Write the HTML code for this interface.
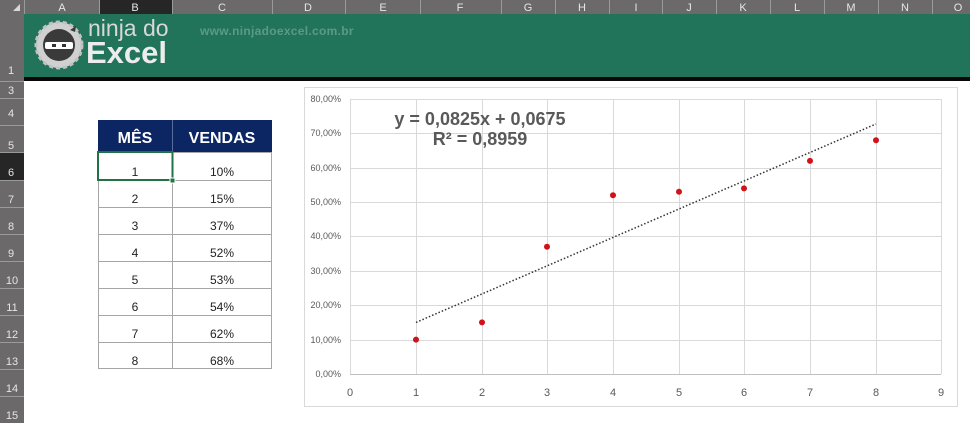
<!DOCTYPE html>
<html><head><style>
body{margin:0;width:970px;height:423px;overflow:hidden;background:#fff;font-family:"Liberation Sans",sans-serif;position:relative}
.a{position:absolute}
</style></head><body>
<svg class="a" style="left:0;top:0" width="970" height="423" xmlns="http://www.w3.org/2000/svg" font-family="Liberation Sans, sans-serif">
<rect x="0" y="0" width="970" height="14" fill="#6b6969"/>
<rect x="99" y="0" width="73" height="14" fill="#262626"/>
<polygon points="20,4 20,11 13,11" fill="#d8d8d8"/>
<g stroke="#9a9a9a" stroke-width="1">
<line x1="24.5" y1="0" x2="24.5" y2="14"/><line x1="99.5" y1="0" x2="99.5" y2="14"/><line x1="172.5" y1="0" x2="172.5" y2="14"/><line x1="272.5" y1="0" x2="272.5" y2="14"/><line x1="345.5" y1="0" x2="345.5" y2="14"/><line x1="420.5" y1="0" x2="420.5" y2="14"/><line x1="501.5" y1="0" x2="501.5" y2="14"/><line x1="555.5" y1="0" x2="555.5" y2="14"/><line x1="609.5" y1="0" x2="609.5" y2="14"/><line x1="662.5" y1="0" x2="662.5" y2="14"/><line x1="716.5" y1="0" x2="716.5" y2="14"/><line x1="770.5" y1="0" x2="770.5" y2="14"/><line x1="824.5" y1="0" x2="824.5" y2="14"/><line x1="878.5" y1="0" x2="878.5" y2="14"/><line x1="932.5" y1="0" x2="932.5" y2="14"/>
</g>
<g fill="#e6e6e6" font-size="11" text-anchor="middle">
<text x="62" y="11">A</text><text x="135" y="11">B</text><text x="222" y="11">C</text><text x="308" y="11">D</text><text x="383" y="11">E</text><text x="460" y="11">F</text><text x="528" y="11">G</text><text x="582" y="11">H</text><text x="636" y="11">I</text><text x="689" y="11">J</text><text x="743" y="11">K</text><text x="797" y="11">L</text><text x="851" y="11">M</text><text x="905" y="11">N</text><text x="958" y="11">O</text>
</g>
<rect x="0" y="14" width="24" height="409" fill="#6b6969"/>
<rect x="0" y="152" width="24" height="28" fill="#262626"/>
<g stroke="#9a9a9a"><line x1="0" y1="81.5" x2="24" y2="81.5"/><line x1="0" y1="98.5" x2="24" y2="98.5"/><line x1="0" y1="125.5" x2="24" y2="125.5"/><line x1="0" y1="152.5" x2="24" y2="152.5"/><line x1="0" y1="180.5" x2="24" y2="180.5"/><line x1="0" y1="207.5" x2="24" y2="207.5"/><line x1="0" y1="234.5" x2="24" y2="234.5"/><line x1="0" y1="261.5" x2="24" y2="261.5"/><line x1="0" y1="288.5" x2="24" y2="288.5"/><line x1="0" y1="315.5" x2="24" y2="315.5"/><line x1="0" y1="342.5" x2="24" y2="342.5"/><line x1="0" y1="369.5" x2="24" y2="369.5"/><line x1="0" y1="396.5" x2="24" y2="396.5"/></g>
<g fill="#e6e6e6" font-size="11" text-anchor="middle">
<text x="11" y="74">1</text><text x="11" y="94">3</text><text x="11" y="117">4</text><text x="11" y="149">5</text><text x="11" y="176">6</text><text x="11" y="203">7</text><text x="11" y="230">8</text><text x="11" y="257">9</text><text x="12" y="284">10</text><text x="12" y="311">11</text><text x="12" y="338">12</text><text x="12" y="365">13</text><text x="12" y="392">14</text><text x="12" y="419">15</text>
</g>
<rect x="24" y="14" width="946" height="63" fill="#21735a"/>
<rect x="24" y="77" width="946" height="4" fill="#080808"/>
<circle cx="59" cy="45" r="23" fill="#d0d0d0" stroke="#c2c2c2" stroke-width="3" stroke-dasharray="4 3"/>
<circle cx="59" cy="45" r="16" fill="#3a3a3a"/>
<rect x="45" y="42" width="28" height="7" rx="2" fill="#fff"/>
<rect x="52" y="44" width="4" height="3" fill="#333"/><rect x="62" y="44" width="4" height="3" fill="#333"/>
<path d="M70 30 l6 -4 l-1 6z" fill="#3a3a3a"/>
<text x="88" y="36" font-size="23" fill="#d8d8d8">ninja do</text>
<text x="86" y="63" font-size="31" font-weight="bold" fill="#ececec">Excel</text>
<text x="200" y="35" font-size="12" font-weight="bold" fill="#5c9a85" letter-spacing="0.3">www.ninjadoexcel.com.br</text>
<rect x="98" y="120" width="174" height="32" fill="#0b2663"/>
<line x1="172.5" y1="120" x2="172.5" y2="152" stroke="#5a6d9a"/>
<text x="135" y="143" font-size="16" font-weight="bold" fill="#fff" text-anchor="middle">MÊS</text>
<text x="222" y="143" font-size="16" font-weight="bold" fill="#fff" text-anchor="middle">VENDAS</text>
<g stroke="#a6a6a6" fill="none">
<rect x="98.5" y="152.5" width="173" height="216"/>
<line x1="172.5" y1="152" x2="172.5" y2="369"/>
<line x1="98" y1="180.5" x2="272" y2="180.5"/><line x1="98" y1="207.5" x2="272" y2="207.5"/><line x1="98" y1="234.5" x2="272" y2="234.5"/><line x1="98" y1="261.5" x2="272" y2="261.5"/><line x1="98" y1="288.5" x2="272" y2="288.5"/><line x1="98" y1="315.5" x2="272" y2="315.5"/><line x1="98" y1="342.5" x2="272" y2="342.5"/>
</g>
<rect x="98" y="152" width="74.5" height="28" fill="none" stroke="#217346" stroke-width="2"/>
<rect x="170" y="178" width="5" height="5" fill="#217346" stroke="#fff" stroke-width="1"/>
<g font-size="12" fill="#222" text-anchor="middle">
<text x="135" y="176">1</text><text x="222" y="176">10%</text>
<text x="135" y="203">2</text><text x="222" y="203">15%</text>
<text x="135" y="230">3</text><text x="222" y="230">37%</text>
<text x="135" y="257">4</text><text x="222" y="257">52%</text>
<text x="135" y="284">5</text><text x="222" y="284">53%</text>
<text x="135" y="311">6</text><text x="222" y="311">54%</text>
<text x="135" y="338">7</text><text x="222" y="338">62%</text>
<text x="135" y="365">8</text><text x="222" y="365">68%</text>
</g>
<rect x="304.5" y="87.5" width="653" height="319" fill="#fff" stroke="#d9d9d9"/>
<g stroke="#d9d9d9">
<line x1="350" y1="99.5" x2="941" y2="99.5"/><line x1="350" y1="133.5" x2="941" y2="133.5"/><line x1="350" y1="168.5" x2="941" y2="168.5"/><line x1="350" y1="202.5" x2="941" y2="202.5"/><line x1="350" y1="236.5" x2="941" y2="236.5"/><line x1="350" y1="271.5" x2="941" y2="271.5"/><line x1="350" y1="305.5" x2="941" y2="305.5"/><line x1="350" y1="340.5" x2="941" y2="340.5"/>
<line x1="350.5" y1="99" x2="350.5" y2="374"/><line x1="416.5" y1="99" x2="416.5" y2="374"/><line x1="482.5" y1="99" x2="482.5" y2="374"/><line x1="547.5" y1="99" x2="547.5" y2="374"/><line x1="613.5" y1="99" x2="613.5" y2="374"/><line x1="679.5" y1="99" x2="679.5" y2="374"/><line x1="744.5" y1="99" x2="744.5" y2="374"/><line x1="810.5" y1="99" x2="810.5" y2="374"/><line x1="876.5" y1="99" x2="876.5" y2="374"/><line x1="941.5" y1="99" x2="941.5" y2="374"/>
</g>
<line x1="350" y1="374.5" x2="941" y2="374.5" stroke="#bfbfbf"/>
<g font-size="9" fill="#595959" text-anchor="end">
<text x="341" y="102">80,00%</text><text x="341" y="136">70,00%</text><text x="341" y="171">60,00%</text><text x="341" y="205">50,00%</text><text x="341" y="239">40,00%</text><text x="341" y="274">30,00%</text><text x="341" y="308">20,00%</text><text x="341" y="343">10,00%</text><text x="341" y="377">0,00%</text>
</g>
<g font-size="11" fill="#595959" text-anchor="middle">
<text x="350" y="396">0</text><text x="416" y="396">1</text><text x="482" y="396">2</text><text x="547" y="396">3</text><text x="613" y="396">4</text><text x="679" y="396">5</text><text x="744" y="396">6</text><text x="810" y="396">7</text><text x="876" y="396">8</text><text x="941" y="396">9</text>
</g>
<line x1="416" y1="322.4" x2="876" y2="124" stroke="#333" stroke-width="1.5" stroke-dasharray="1.5 2"/>
<g fill="#d0121b">
<circle cx="416" cy="339.6" r="3"/><circle cx="482" cy="322.4" r="3"/><circle cx="547" cy="246.8" r="3"/><circle cx="613" cy="195.3" r="3"/><circle cx="679" cy="191.8" r="3"/><circle cx="744" cy="188.4" r="3"/><circle cx="810" cy="160.9" r="3"/><circle cx="876" cy="140.3" r="3"/>
</g>
<text x="480" y="125" font-size="18" font-weight="bold" fill="#595959" text-anchor="middle">y = 0,0825x + 0,0675</text>
<text x="480" y="145" font-size="18" font-weight="bold" fill="#595959" text-anchor="middle">R² = 0,8959</text>
</svg>
</body></html>
